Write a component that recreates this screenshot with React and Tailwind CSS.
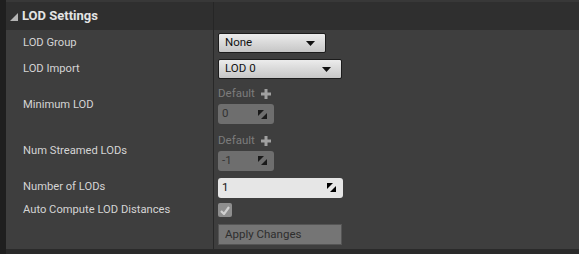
import React from 'react'

const font = { fontFamily: 'Roboto, "Open Sans", sans-serif' }

function Arrow() {
  return (
    <svg width="9" height="5" viewBox="0 0 9 5" className="shrink-0">
      <polygon points="0,0 9,0 4.5,5" fill="#111" />
    </svg>
  )
}

function SpinIcon({ color = '#1a1a1a' }) {
  return (
    <svg width="9" height="9" viewBox="0 0 9 9" className="shrink-0">
      <polygon points="0,0 6,0 0,6" fill={color} />
      <polygon points="9,3 9,9 3,9" fill={color} />
    </svg>
  )
}

function Plus() {
  return (
    <svg width="10" height="10" viewBox="0 0 10 10" className="shrink-0">
      <rect x="3.5" y="0" width="3" height="10" fill="#a0a0a0" />
      <rect x="0" y="3.5" width="10" height="3" fill="#a0a0a0" />
    </svg>
  )
}

function Dropdown({ label, width }) {
  return (
    <div
      className={`${width} h-[20px] flex items-center justify-between pl-[6px] pr-[10px] rounded-[2px] border border-[#1c1c1c] bg-gradient-to-b from-[#ececec] to-[#c6c6c6] text-[11.5px] text-[#111]`}
    >
      <span>{label}</span>
      <Arrow />
    </div>
  )
}

function DefaultSpin({ value }) {
  return (
    <div className="flex flex-col gap-[2px]">
      <div className="h-[16px] flex items-center gap-[6px] text-[11.5px] text-[#7c7c7c]">
        <span>Default</span>
        <Plus />
      </div>
      <div className="w-[56px] h-[20px] flex items-center justify-between pl-[4px] pr-[7px] rounded-[3px] bg-[#6e6e6e] text-[11.5px] text-[#333]">
        <span>{value}</span>
        <SpinIcon />
      </div>
    </div>
  )
}

function Row({ label, h, children }) {
  return (
    <div className={`flex ${h}`}>
      <div className="w-[207px] flex items-center pl-[17px] text-[11.2px] text-[#d4d4d4]">{label}</div>
      <div className="w-px bg-[#282828]" />
      <div className="flex-1 flex flex-col justify-center pl-[4px]">{children}</div>
    </div>
  )
}

export default function App() {
  return (
    <div className="w-[579px] h-[254px] flex bg-[#1f1f1f] overflow-hidden" style={font}>
      <div className="w-[6px] bg-[#1f1f1f]" />
      <div className="flex-1 flex flex-col">
        <div className="h-[30px] flex bg-[#2f2f2f] border-t-2 border-[#383838]">
          <div className="w-[207px] flex items-center pl-[4px] gap-[4px]">
            <svg width="8" height="8" viewBox="0 0 8 8" className="shrink-0 mt-[2px]">
              <polygon points="8,0 8,8 0,8" fill="#b4b4b4" />
            </svg>
            <span className="text-[13px] font-bold text-[#e4e4e4]">LOD Settings</span>
          </div>
          <div className="w-px bg-[#262626]" />
          <div className="flex-1" />
        </div>
        <div className="flex-1 flex flex-col bg-[#3e3e3e]">
          <Row label="LOD Group" h="h-[26px]">
            <Dropdown label="None" width="w-[108px]" />
          </Row>
          <Row label="LOD Import" h="h-[26px]">
            <Dropdown label="LOD 0" width="w-[124px]" />
          </Row>
          <Row label="Minimum LOD" h="h-[46px]">
            <DefaultSpin value="0" />
          </Row>
          <Row label="Num Streamed LODs" h="h-[47px]">
            <DefaultSpin value="-1" />
          </Row>
          <Row label="Number of LODs" h="h-[25px]">
            <div className="w-[125px] h-[20px] flex items-center justify-between pl-[4px] pr-[7px] rounded-[3px] bg-[#e6e6e6] text-[11.5px] text-[#111]">
              <span>1</span>
              <SpinIcon color="#000" />
            </div>
          </Row>
          <Row label="Auto Compute LOD Distances" h="h-[20px]">
            <div className="w-[14px] h-[14px] flex items-center justify-center rounded-[2px] bg-[#8e8e8e]">
              <svg width="10" height="9" viewBox="0 0 10 9">
                <path d="M1 5 L4 8 L9 1" stroke="#d0d0d0" strokeWidth="2.2" fill="none" />
              </svg>
            </div>
          </Row>
          <Row label="" h="h-[29px]">
            <div className="w-[124px] h-[21px] flex items-center pl-[6px] border border-[#555] bg-[#757575] text-[11.5px] text-[#2e2e2e]">
              Apply Changes
            </div>
          </Row>
        </div>
        <div className="h-[5px] bg-[#2a2a2a]" />
      </div>
    </div>
  )
}
